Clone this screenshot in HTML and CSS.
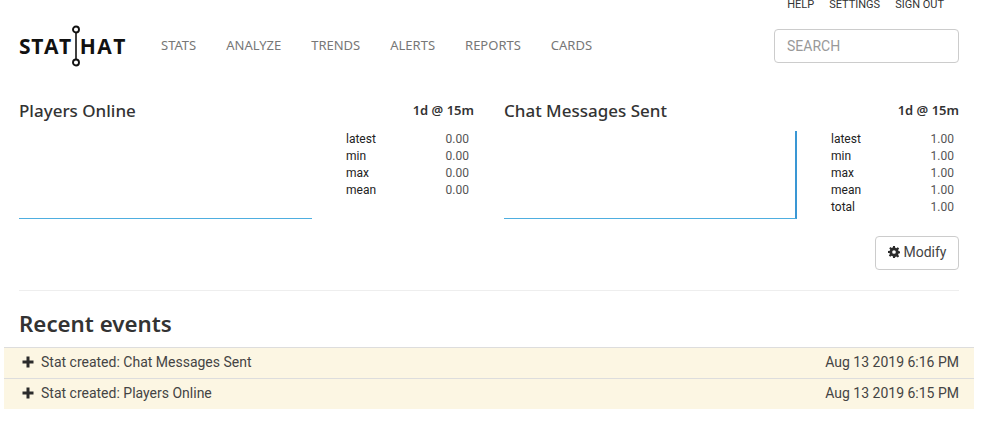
FILE: index.html
```html
<!DOCTYPE html>
<html lang="en">
<head>
<meta charset="utf-8">
<title>StatHat</title>
<link rel="stylesheet" href="styles.css">
</head>
<body>
<header class="header">
  <nav class="top-links">
    <a>Help</a><a>Settings</a><a>Sign out</a>
  </nav>
  <div class="main-bar">
    <a class="logo">
      <span class="logo-text">STAT</span>
      <svg class="logo-mark" width="12" height="42" viewBox="0 0 12 42" aria-hidden="true">
        <circle cx="6" cy="4.5" r="3" fill="none" stroke="#111" stroke-width="1.9"/>
        <path d="M6 7.5V34.5" stroke="#111" stroke-width="1.6"/>
        <circle cx="6" cy="37.5" r="3" fill="none" stroke="#111" stroke-width="1.9"/>
      </svg>
      <span class="logo-text logo-text-wide">HAT</span>
    </a>
    <nav class="main-nav">
      <a>Stats</a><a>Analyze</a><a>Trends</a><a>Alerts</a><a>Reports</a><a>Cards</a>
    </nav>
    <input class="search" type="text" placeholder="SEARCH">
  </div>
</header>
<main class="content">
  <section class="stats-grid">
    <article class="stat">
      <div class="stat-head"><h2>Players Online</h2><span class="range">1d @ 15m</span></div>
      <div class="stat-body">
        <div class="chart"></div>
        <dl class="figures">
          <div><dt>latest</dt><dd>0.00</dd></div>
          <div><dt>min</dt><dd>0.00</dd></div>
          <div><dt>max</dt><dd>0.00</dd></div>
          <div><dt>mean</dt><dd>0.00</dd></div>
        </dl>
      </div>
    </article>
    <article class="stat">
      <div class="stat-head"><h2>Chat Messages Sent</h2><span class="range">1d @ 15m</span></div>
      <div class="stat-body">
        <div class="chart chart-spike"></div>
        <dl class="figures">
          <div><dt>latest</dt><dd>1.00</dd></div>
          <div><dt>min</dt><dd>1.00</dd></div>
          <div><dt>max</dt><dd>1.00</dd></div>
          <div><dt>mean</dt><dd>1.00</dd></div>
          <div><dt>total</dt><dd>1.00</dd></div>
        </dl>
      </div>
    </article>
  </section>
  <div class="actions">
    <button class="btn" type="button">
      <svg class="gear" width="12" height="12" viewBox="-1 -1 26 26" aria-hidden="true">
        <path fill-rule="evenodd" fill="#2b2b2b" d="M10 -1h4l.7 3.9 2.3 1 3.2-2.2 2.9 2.9-2.2 3.2 1 2.3 3.9.7v4l-3.9.7-1 2.3 2.2 3.2-2.9 2.9-3.2-2.2-2.3 1L14 25h-4l-.7-3.9-2.3-1-3.2 2.2-2.9-2.9 2.2-3.2-1-2.3L-1 14v-4l3.9-.7 1-2.3-2.2-3.2 2.9-2.9L7 3.1l2.3-1zM12 8a4 4 0 1 0 0 8 4 4 0 0 0 0-8z"/>
      </svg>
      Modify
    </button>
  </div>
  <hr class="divider">
  <h1 class="events-title">Recent events</h1>
  <ul class="events">
    <li><span class="event-name"><svg class="plus" width="12" height="12" viewBox="0 0 12 12" aria-hidden="true"><path d="M4.5 .5h3v4h4v3h-4v4h-3v-4h-4v-3h4z" fill="#2b2b2b"/></svg>Stat created: Chat Messages Sent</span><time>Aug 13 2019 6:16 PM</time></li>
    <li><span class="event-name"><svg class="plus" width="12" height="12" viewBox="0 0 12 12" aria-hidden="true"><path d="M4.5 .5h3v4h4v3h-4v4h-3v-4h-4v-3h4z" fill="#2b2b2b"/></svg>Stat created: Players Online</span><time>Aug 13 2019 6:15 PM</time></li>
  </ul>
</main>
</body>
</html>
```
FILE: styles.css
```css
* { box-sizing: border-box; }
html, body { margin: 0; padding: 0; }
body {
  width: 982px;
  height: 432px;
  overflow: hidden;
  background: #fff;
  color: #3a3a3a;
  font-family: Roboto, "Liberation Sans", sans-serif;
  font-size: 14px;
}
.header { padding: 0 23px 0 19px; }
.top-links {
  display: flex;
  justify-content: flex-end;
  gap: 15px;
  height: 25px;
  padding-right: 15px;
  font-size: 11px;
  line-height: 9px;
  text-transform: uppercase;
  color: #333;
}
.main-bar {
  display: flex;
  align-items: center;
  height: 42px;
}
.logo {
  display: flex;
  align-items: center;
  width: 107px;
  color: #111;
}
.logo-text {
  font-family: "Open Sans", sans-serif;
  font-size: 21px;
  font-weight: 700;
  letter-spacing: 0.6px;
  line-height: 42px;
}
.logo-text-wide { letter-spacing: 1.5px; }
.logo-mark { flex: none; margin: 0 -2px 0 -2px; }
.main-nav {
  display: flex;
  gap: 30px;
  margin-left: 35px;
  font-family: "Noto Sans", sans-serif;
  font-size: 13px;
  text-transform: uppercase;
  color: #777;
  position: relative;
  top: -1px;
}
.search {
  width: 185px;
  height: 34px;
  margin-left: auto;
  margin-top: -1px;
  padding: 0 12px;
  border: 1px solid #ccc;
  border-radius: 4px;
  font-family: Roboto, sans-serif;
  font-size: 14px;
  background: #fff;
}
.search::placeholder { color: #999; opacity: 1; }
.content { padding: 0 23px 0 19px; }
.stats-grid {
  display: grid;
  grid-template-columns: 455px 455px;
  gap: 30px;
  margin-top: 34px;
}
.stat-head {
  display: flex;
  justify-content: space-between;
  align-items: flex-start;
  height: 30px;
  color: #333;
}
.stat-head h2 {
  margin: 0;
  font-family: "Noto Sans", sans-serif;
  font-size: 17px;
  font-weight: 500;
  line-height: 20px;
}
.range {
  font-family: "Noto Sans", sans-serif;
  font-size: 13px;
  font-weight: 600;
  line-height: 18px;
}
.stat-body { display: flex; justify-content: space-between; }
.chart {
  width: 293px;
  height: 88px;
  border-bottom: 1px solid #4eaee0;
}
.chart-spike {
  border-right: 2px solid #3a97d4;
}
.figures {
  width: 128px;
  margin: 0;
  font-size: 12px;
  line-height: 17px;
  color: #222;
}
.figures div {
  display: flex;
  justify-content: space-between;
  padding-right: 5px;
}
.figures dt, .figures dd { margin: 0; }
.figures dd { color: #555; }
.actions {
  display: flex;
  justify-content: flex-end;
  margin-top: 17px;
}
.btn {
  display: flex;
  align-items: center;
  justify-content: center;
  gap: 4px;
  width: 84px;
  height: 34px;
  padding: 0 0 2px;
  background: #fff;
  border: 1px solid #ccc;
  border-radius: 4px;
  font-family: Roboto, sans-serif;
  font-size: 14px;
  color: #444;
}
.divider {
  margin: 20px 0 0;
  border: 0;
  border-top: 1px solid #eee;
}
.events-title {
  margin: 19px 0 0;
  font-family: "Noto Sans", sans-serif;
  font-size: 22.3px;
  font-weight: 600;
  line-height: 28px;
  color: #333;
}
.events {
  list-style: none;
  margin: 9px -15px 0;
  padding: 0;
}
.events li {
  display: flex;
  justify-content: space-between;
  align-items: center;
  height: 31px;
  padding: 0 15px 2px 18px;
  background: #fcf6e3;
  border-top: 1px solid #ddd;
  font-size: 14px;
  color: #444;
}
.event-name { display: flex; align-items: center; }
.plus { margin-right: 7px; }
```
